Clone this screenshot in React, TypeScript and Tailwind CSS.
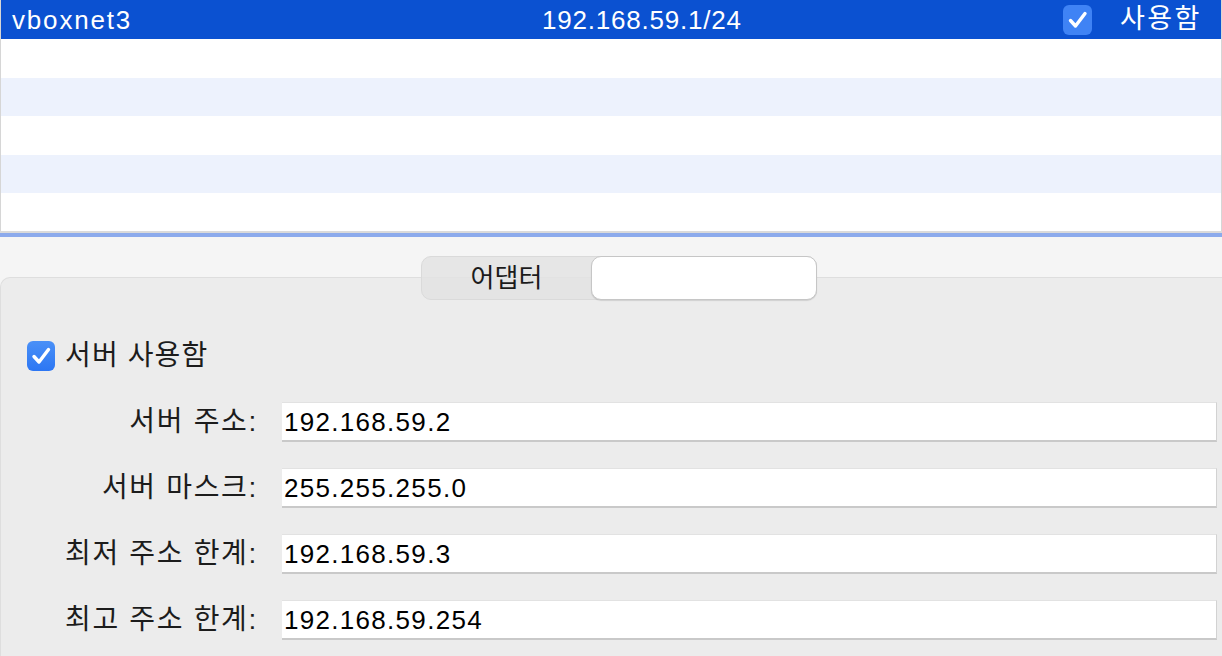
import React from "react";

const font = { fontFamily: '"Liberation Sans", "Noto Sans CJK KR", sans-serif' };

function Check({ className }: { className: string }) {
  return (
    <span className={`flex items-center justify-center rounded-[6px] ${className}`}>
      <svg viewBox="0 0 28 30" className="w-full h-full">
        <path
          d="M7 15.5 L12 21 L21.5 8.5"
          fill="none"
          stroke="white"
          strokeWidth="3.4"
          strokeLinecap="round"
          strokeLinejoin="round"
        />
      </svg>
    </span>
  );
}

const rows = ["bg-white h-[39px]", "bg-[#edf2fd] h-[38px]", "bg-white h-[39px]", "bg-[#edf2fd] h-[38px]", "bg-white h-[38px]"];

const fields = [
  { label: "서버 주소:", value: "192.168.59.2" },
  { label: "서버 마스크:", value: "255.255.255.0" },
  { label: "최저 주소 한계:", value: "192.168.59.3" },
  { label: "최고 주소 한계:", value: "192.168.59.254" },
];

export default function App() {
  return (
    <div className="w-[1222px] h-[656px] overflow-hidden bg-[#f5f5f5] text-[26px] text-[#1c1c1c]" style={font}>
      {/* network list */}
      <div className="border-l border-r border-[#d6d6d6]">
        <div className="h-[39px] bg-[#0b51d1] text-white flex items-center">
          <span className="w-[541px] pl-[11px] leading-none tracking-[0.07em]">vboxnet3</span>
          <span className="w-[521px] leading-none tracking-[0.03em]">192.168.59.1/24</span>
          <Check className="w-[29px] h-[30px] bg-[#3f83f5]" />
          <span className="ml-[28px] leading-none text-[27px] tracking-[0.09em]">사용함</span>
        </div>
        {rows.map((r, i) => (
          <div key={i} className={r} />
        ))}
      </div>
      <div className="h-[2px] bg-[#dadada]" />
      <div className="h-[4px] bg-[#8caaec]" />

      {/* DHCP server panel */}
      <div className="pt-[19px]">
        <div className="relative ml-[421px] w-[396px] h-[44px] flex rounded-[10px] bg-[#e2e2e2]/80 border border-[#dadada]">
          <div className="w-[169px] flex items-center justify-center leading-none">어댑터</div>
          <div className="flex-1 -my-px -mr-px bg-white rounded-[10px] border border-[#c6c6c6] shadow-[0_1px_1px_rgba(0,0,0,0.12)]" />
        </div>
        <div className="-mt-[23px] w-[1260px] h-[400px] bg-[#ececec] border-t border-l border-[#dedede] rounded-tl-[10px] pt-[63px] pl-[26px]">
          <div className="flex items-center h-[30px]">
            <Check className="w-[28px] h-[30px] bg-gradient-to-b from-[#4a90f7] to-[#2c76f3]" />
            <span className="ml-[10px] leading-none text-[28px] tracking-[0.04em]">서버 사용함</span>
          </div>
          <div className="-ml-[26px] mt-[31px] grid grid-cols-[257px_935px] gap-x-[24px] gap-y-[26px]">
            {fields.map((f) => (
              <React.Fragment key={f.label}>
                <div className="h-[40px] flex items-center justify-end leading-none text-[28px] tracking-[0.06em]">{f.label}</div>
                <div className="h-[40px] bg-white border-t border-[#e2e2e2] border-b-2 border-b-[#c9c9c9] border-r border-r-[#d2d2d2] flex items-center pl-[2px] leading-none tracking-[0.05em] text-black">
                  {f.value}
                </div>
              </React.Fragment>
            ))}
          </div>
        </div>
      </div>
    </div>
  );
}
